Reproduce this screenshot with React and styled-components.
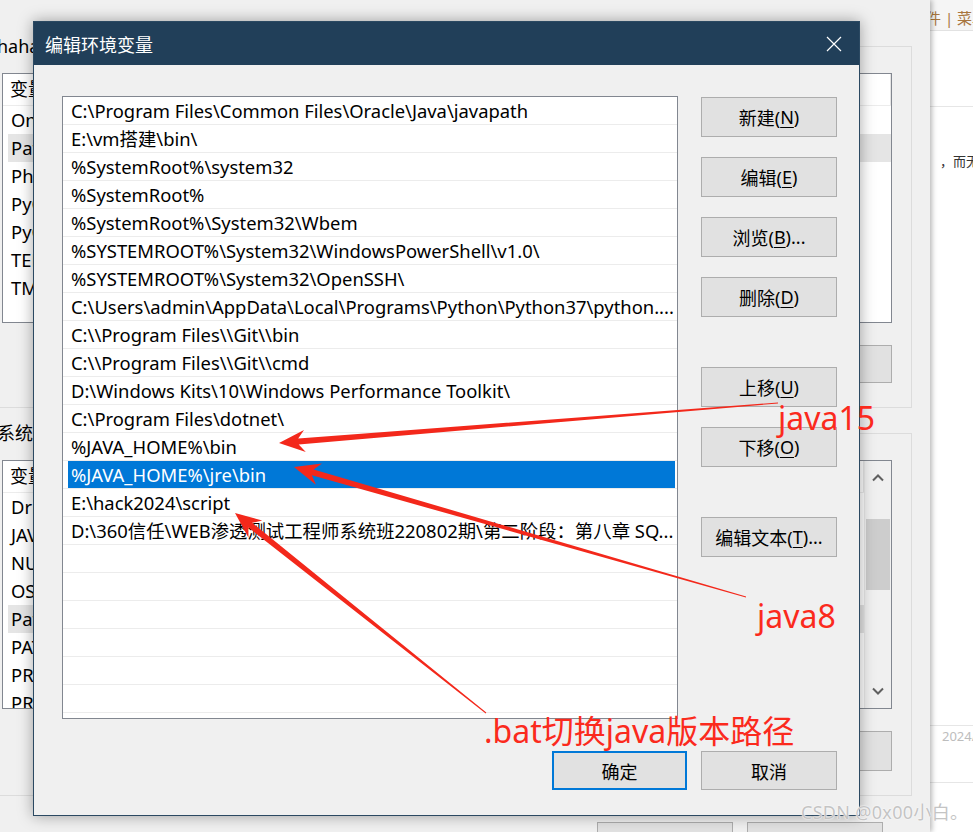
import React from "react";
import styled, { createGlobalStyle } from "styled-components";

const GlobalStyle = createGlobalStyle`
  html, body { margin: 0; padding: 0; }
  body {
    background: #f0f0f0;
    font-family: "Noto Sans", "Noto Sans CJK SC", sans-serif;
    overflow: hidden;
  }
  #root { width: 973px; height: 832px; }
`;

const Screen = styled.div`
  position: relative;
  width: 973px;
  height: 832px;
  overflow: hidden;
  display: flex;
  background: #f0f0f0;
  color: #000;
`;

/* ---------- background window ---------- */
const BgWindow = styled.div`
  position: relative;
  z-index: 2;
  flex: none;
  width: 930px;
  height: 832px;
  box-sizing: border-box;
  padding-right: 18px;
  display: flex;
  flex-direction: column;
  background: #f0f0f0;
  box-shadow: 2px 0 5px rgba(0, 0, 0, 0.28);
`;

const Group = styled.div`
  margin-top: ${(p) => p.$top}px;
  margin-left: -12px;
  border: 1px solid #dcdcdc;
  padding: 0 19px 24px 13px;
  display: flex;
  flex-direction: column;
`;

const GroupLabel = styled.div`
  align-self: flex-start;
  margin: -13px 0 0 -5px;
  height: 24px;
  line-height: 24px;
  padding-right: 4px;
  background: #f0f0f0;
  font-size: 18px;
  white-space: nowrap;
`;

const BgList = styled.div`
  margin-top: 15px;
  height: ${(p) => p.$h}px;
  box-sizing: border-box;
  border: 1px solid #828790;
  background: #fff;
  display: flex;
  overflow: hidden;
`;

const BgListCol = styled.div`
  flex: 1;
  min-width: 0;
  display: flex;
  flex-direction: column;
`;

const BgHeader = styled.div`
  height: 31px;
  flex: none;
  display: flex;
  border-bottom: 1px solid #ececec;
`;

const BgHeadCell = styled.div`
  width: ${(p) => (p.$w ? `${p.$w}px` : "auto")};
  flex: ${(p) => (p.$w ? "none" : "1")};
  border-right: 1px solid #e5e5e5;
  padding-left: 7px;
  line-height: 31px;
  font-size: 18px;
  white-space: nowrap;
`;

const BgRow = styled.div`
  height: 28px;
  flex: none;
  margin-left: 5px;
  padding-left: 3px;
  line-height: 28px;
  font-size: 18.4px;
  white-space: nowrap;
  background: ${(p) => (p.$hl ? "#e5e5e5" : "transparent")};
`;

const Scrollbar = styled.div`
  width: 26px;
  flex: none;
  background: #f0f0f0;
  display: flex;
  flex-direction: column;
  align-items: center;
  border-left: 1px solid #e8e8e8;
`;

const ScrollArrow = styled.div`
  height: 34px;
  flex: none;
  display: flex;
  align-items: center;
  justify-content: center;
`;

const ScrollThumb = styled.div`
  margin-top: 24px;
  width: 24px;
  height: 71px;
  background: #cdcdcd;
`;

const ScrollSpace = styled.div`
  flex: 1;
`;

const BgButtonRow = styled.div`
  display: flex;
  justify-content: flex-end;
  gap: 14px;
  margin-top: ${(p) => p.$mt}px;
  margin-right: ${(p) => p.$mr || 0}px;
`;

const BgButton = styled.div`
  width: 136px;
  height: ${(p) => p.$h}px;
  box-sizing: border-box;
  border: 1px solid #adadad;
  background: #e1e1e1;
  font-size: 18px;
  display: flex;
  align-items: center;
  justify-content: center;
`;

/* ---------- right (browser) window ---------- */
const SideWindow = styled.div`
  flex: 1;
  min-width: 0;
  background: #fff;
  display: flex;
  flex-direction: column;
  font-size: 13px;
`;

const SideTop = styled.div`
  height: 30px;
  flex: none;
  background: #f5f5f5;
  border-bottom: 1px solid #e2e2e2;
  line-height: 36px;
  white-space: nowrap;
  color: #a8763e;
  font-size: 15px;
  margin-left: -4px;
`;

const SideBand = styled.div`
  height: ${(p) => p.$h}px;
  flex: none;
  box-sizing: border-box;
  border-bottom: ${(p) => (p.$line ? "1px solid #e6e6e6" : "none")};
  padding: ${(p) => p.$pad || "0"};
  white-space: nowrap;
  color: ${(p) => p.$color || "#333"};
  font-size: ${(p) => p.$fs || 13}px;
  line-height: 18px;
`;

/* ---------- dialog ---------- */
const Dialog = styled.div`
  position: absolute;
  left: 33px;
  top: 21px;
  width: 827px;
  height: 795px;
  box-sizing: border-box;
  border: 1px solid #2b4962;
  background: #f0f0f0;
  box-shadow: 0 0 14px rgba(0, 0, 0, 0.35);
  display: flex;
  flex-direction: column;
  z-index: 5;
`;

const TitleBar = styled.div`
  height: 43px;
  flex: none;
  background: #213f59;
  display: flex;
  align-items: center;
  padding-left: 11px;
  color: #fff;
  font-size: 18px;
  font-family: "Noto Sans CJK SC", sans-serif;
`;

const TitleText = styled.div`
  flex: 1;
`;

const CloseBox = styled.div`
  width: 50px;
  height: 43px;
  display: flex;
  align-items: center;
  justify-content: center;
`;

const Body = styled.div`
  flex: 1;
  display: flex;
  flex-direction: column;
  padding: 31px 22px 0 28px;
`;

const MainRow = styled.div`
  display: flex;
  gap: 23px;
`;

const PathList = styled.div`
  width: 616px;
  height: 623px;
  box-sizing: border-box;
  border: 1px solid #828790;
  background: #fff;
  overflow: hidden;
  display: flex;
  flex-direction: column;
`;

const PathRow = styled.div`
  height: 28px;
  flex: none;
  box-sizing: border-box;
  border-bottom: 1px solid #ececec;
  display: flex;
`;

const PathCell = styled.div`
  flex: 1;
  min-width: 0;
  margin: 0 2px 0 5px;
  padding-left: 3px;
  line-height: 28px;
  font-size: 18.4px;
  white-space: nowrap;
  overflow: hidden;
  background: ${(p) => (p.$sel ? "#0078d7" : "transparent")};
  color: ${(p) => (p.$sel ? "#fff" : "#000")};
`;

const ButtonCol = styled.div`
  width: 136px;
  display: flex;
  flex-direction: column;
`;

const Button = styled.div`
  width: ${(p) => p.$w || 136}px;
  height: ${(p) => p.$h || 40}px;
  margin-top: ${(p) => p.$mt || 0}px;
  box-sizing: border-box;
  border: ${(p) => (p.$default ? "2px solid #0078d7" : "1px solid #adadad")};
  background: #e1e1e1;
  font-size: 18px;
  display: flex;
  align-items: center;
  justify-content: center;
  white-space: nowrap;
`;

const Key = styled.span`
  text-decoration: underline;
  text-underline-offset: 3px;
  text-decoration-thickness: 1px;
`;

const Footer = styled.div`
  display: flex;
  justify-content: flex-end;
  gap: 14px;
  margin-top: 32px;
`;

/* ---------- annotations ---------- */
const Overlay = styled.svg`
  position: absolute;
  left: 0;
  top: 0;
  z-index: 10;
  pointer-events: none;
`;

const RedLabel = styled.div`
  position: absolute;
  left: ${(p) => p.$x}px;
  top: ${(p) => p.$y}px;
  z-index: 11;
  color: #fb2a1d;
  font-size: 32px;
  line-height: 32px;
  white-space: nowrap;
  font-family: "Noto Sans", "Noto Sans CJK SC", sans-serif;
`;

const Watermark = styled.div`
  position: absolute;
  left: 801px;
  top: 800px;
  z-index: 12;
  font-size: 18px;
  line-height: 24px;
  letter-spacing: 0.3px;
  color: #c4c4c4;
  text-shadow: 0 0 2px #fff, 0 0 1px #fff;
  white-space: nowrap;
`;

const paths = [
  "C:\\Program Files\\Common Files\\Oracle\\Java\\javapath",
  "E:\\vm搭建\\bin\\",
  "%SystemRoot%\\system32",
  "%SystemRoot%",
  "%SystemRoot%\\System32\\Wbem",
  "%SYSTEMROOT%\\System32\\WindowsPowerShell\\v1.0\\",
  "%SYSTEMROOT%\\System32\\OpenSSH\\",
  "C:\\Users\\admin\\AppData\\Local\\Programs\\Python\\Python37\\python....",
  "C:\\\\Program Files\\\\Git\\\\bin",
  "C:\\\\Program Files\\\\Git\\\\cmd",
  "D:\\Windows Kits\\10\\Windows Performance Toolkit\\",
  "C:\\Program Files\\dotnet\\",
  "%JAVA_HOME%\\bin",
  "%JAVA_HOME%\\jre\\bin",
  "E:\\hack2024\\script",
  "D:\\360信任\\WEB渗透测试工程师系统班220802期\\第二阶段：第八章 SQ...",
];
const SELECTED = 13;
const TOTAL_ROWS = 23;

const userVars = ["OneDrive", "Path", "PhpStorm", "PyCharm", "PyCharm Community Edition", "TEMP", "TMP"];
const sysVars = [
  "DriverData",
  "JAVA_HOME",
  "NUMBER_OF_PROCESSORS",
  "OS",
  "Path",
  "PATHEXT",
  "PROCESSOR_ARCHITECTURE",
  "PROCESSOR_IDENTIFIER",
];

function arrowPoints(tip, tail, headLen, headHalf, neckW, tailW) {
  const dx = tail[0] - tip[0];
  const dy = tail[1] - tip[1];
  const len = Math.hypot(dx, dy);
  const ux = dx / len;
  const uy = dy / len;
  const nx = -uy;
  const ny = ux;
  const P = (a, b) => [tip[0] + ux * a + nx * b, tip[1] + uy * a + ny * b];
  const pts = [
    tip,
    P(headLen, headHalf),
    P(headLen * 0.75, neckW / 2),
    [tail[0] + nx * (tailW / 2), tail[1] + ny * (tailW / 2)],
    [tail[0] - nx * (tailW / 2), tail[1] - ny * (tailW / 2)],
    P(headLen * 0.75, -neckW / 2),
    P(headLen, -headHalf),
  ];
  return pts.map((p) => `${p[0].toFixed(1)},${p[1].toFixed(1)}`).join(" ");
}

const arrows = [
  { tip: [279, 443], tail: [778, 403] },
  { tip: [294, 467], tail: [746, 597] },
  { tip: [235, 513], tail: [486, 713] },
];

const Chevron = ({ down }) => (
  <svg width="12" height="8" viewBox="0 0 12 8">
    <path
      d={down ? "M1 1.5 L6 6.5 L11 1.5" : "M1 6.5 L6 1.5 L11 6.5"}
      fill="none"
      stroke="#606060"
      strokeWidth="2"
    />
  </svg>
);

export default function App() {
  return (
    <>
      <GlobalStyle />
      <Screen>
        <BgWindow>
          <Group $top={46}>
            <GroupLabel>haha 的用户变量(U)</GroupLabel>
            <BgList $h={250}>
              <BgListCol>
                <BgHeader>
                  <BgHeadCell $w={220}>变量</BgHeadCell>
                  <BgHeadCell>值</BgHeadCell>
                  <BgHeadCell $w={26} />
                </BgHeader>
                {userVars.map((v, i) => (
                  <BgRow key={v + i} $hl={i === 1}>
                    {v}
                  </BgRow>
                ))}
              </BgListCol>
            </BgList>
            <BgButtonRow $mt={22}>
              <BgButton $h={38}>新建(N)...</BgButton>
              <BgButton $h={38}>编辑(E)...</BgButton>
              <BgButton $h={38}>删除(D)</BgButton>
            </BgButtonRow>
          </Group>
          <Group $top={25}>
            <GroupLabel>系统变量(S)</GroupLabel>
            <BgList $h={249}>
              <BgListCol>
                <BgHeader>
                  <BgHeadCell $w={220}>变量</BgHeadCell>
                  <BgHeadCell>值</BgHeadCell>
                </BgHeader>
                {sysVars.map((v, i) => (
                  <BgRow key={v + i} $hl={i === 4}>
                    {v}
                  </BgRow>
                ))}
              </BgListCol>
              <Scrollbar>
                <ScrollArrow>
                  <Chevron />
                </ScrollArrow>
                <ScrollThumb />
                <ScrollSpace />
                <ScrollArrow>
                  <Chevron down />
                </ScrollArrow>
              </Scrollbar>
            </BgList>
            <BgButtonRow $mt={22}>
              <BgButton $h={40}>新建(W)...</BgButton>
              <BgButton $h={40}>编辑(I)...</BgButton>
              <BgButton $h={40}>删除(L)</BgButton>
            </BgButtonRow>
          </Group>
          <BgButtonRow $mt={26} $mr={29}>
            <BgButton $h={40}>确定</BgButton>
            <BgButton $h={40}>取消</BgButton>
          </BgButtonRow>
        </BgWindow>

        <SideWindow>
          <SideTop>件 | 菜鸟教程</SideTop>
          <SideBand $h={76} $line />
          <SideBand $h={86} $pad="45px 0 0 10px">，而无需</SideBand>
          <SideBand $h={533} $line />
          <SideBand $h={57} $pad="1px 0 0 12px" $color="#bdbdbd" $line>
            2024/
          </SideBand>
        </SideWindow>

        <Dialog>
          <TitleBar>
            <TitleText>编辑环境变量</TitleText>
            <CloseBox>
              <svg width="16" height="16" viewBox="0 0 16 16">
                <path d="M1 1 L15 15 M15 1 L1 15" stroke="#fff" strokeWidth="1.2" />
              </svg>
            </CloseBox>
          </TitleBar>
          <Body>
            <MainRow>
              <PathList>
                {Array.from({ length: TOTAL_ROWS }).map((_, i) => (
                  <PathRow key={i}>
                    <PathCell $sel={i === SELECTED}>{paths[i] || "\u00a0"}</PathCell>
                  </PathRow>
                ))}
              </PathList>
              <ButtonCol>
                <Button $mt={1}>
                  新建(<Key>N</Key>)
                </Button>
                <Button $mt={20}>
                  编辑(<Key>E</Key>)
                </Button>
                <Button $mt={20}>
                  浏览(<Key>B</Key>)...
                </Button>
                <Button $mt={20}>
                  删除(<Key>D</Key>)
                </Button>
                <Button $mt={50}>
                  上移(<Key>U</Key>)
                </Button>
                <Button $mt={20}>
                  下移(<Key>O</Key>)
                </Button>
                <Button $mt={50}>
                  编辑文本(<Key>T</Key>)...
                </Button>
              </ButtonCol>
            </MainRow>
            <Footer>
              <Button $w={135} $h={39} $default>
                确定
              </Button>
              <Button $w={136} $h={39}>
                取消
              </Button>
            </Footer>
          </Body>
        </Dialog>

        <Overlay width="973" height="832" viewBox="0 0 973 832">
          {arrows.map((a, i) => (
            <polygon key={i} points={arrowPoints(a.tip, a.tail, 26, 11, 6, 1)} fill="#f3281b" />
          ))}
        </Overlay>
        <RedLabel $x={778} $y={402}>java15</RedLabel>
        <RedLabel $x={757} $y={600}>java8</RedLabel>
        <RedLabel $x={484} $y={715}>.bat切换java版本路径</RedLabel>
        <Watermark>CSDN @0x00小白。</Watermark>
      </Screen>
    </>
  );
}
